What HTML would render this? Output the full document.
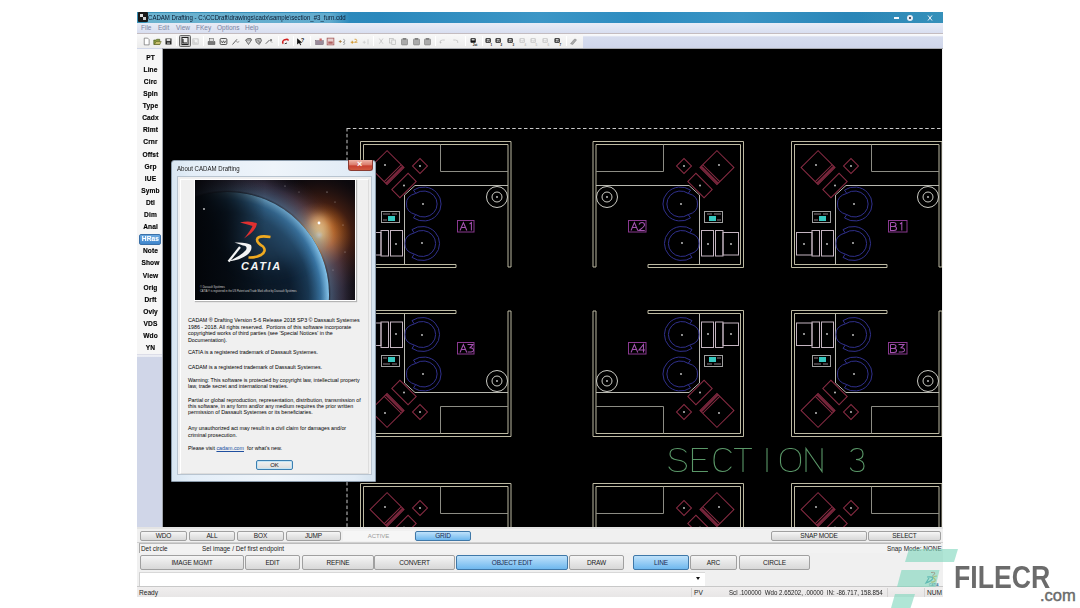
<!DOCTYPE html>
<html><head><meta charset="utf-8">
<style>
*{margin:0;padding:0;box-sizing:border-box}
html,body{width:1080px;height:608px;overflow:hidden;background:#fff;font-family:"Liberation Sans",sans-serif}
.a{position:absolute}
#win{left:137px;top:12px;width:806px;height:585px;background:#f0f0f0}
#title{left:0;top:0;width:806px;height:11px;background:linear-gradient(90deg,#3a92b8 0%,#2a88bc 30%,#3c96c6 50%,#2d8cc0 62%,#3a94c4 75%,#2a86b8 88%,#2b88b4 100%)}
#menu{left:0;top:11px;width:806px;height:11px;background:linear-gradient(#e8ecf6,#d8def0);border-bottom:1px solid #c4bcc0}
#tool{left:0;top:22px;width:806px;height:15px;background:linear-gradient(#fafbfd 0,#f4f6fa 1.5px,#d6dcee 3px,#cfd6ea);border-bottom:1.5px solid #a8aab0}
#toolband{left:0;top:22px;width:446px;height:13.5px;background:linear-gradient(#f8f8f8,#ececec)}
#lp{left:0;top:36px;width:26px;height:479px;background:#d0d6e8;border-right:1.5px solid #a0a4ac}
#lpw{left:0;top:37px;width:25px;height:308px;background:linear-gradient(#f6f6f6 0,#f6f6f6 305px,#dcdde8 305.5px,#eceef4 306.5px,#e8eaf2 308px)}
#canvas{left:26px;top:37px;width:779px;height:478px;background:#000}
#bot{left:0;top:515px;width:806px;height:70px;background:#f0f0f0}
.lbl{position:absolute;left:1px;width:25px;text-align:center;font-weight:bold;font-size:7.2px;color:#000;line-height:8px;transform:scaleX(0.92);letter-spacing:0.1px;-webkit-text-stroke:0.15px #000}
.btn{position:absolute;height:10px;border:1px solid #a0a0a0;border-radius:2px;background:linear-gradient(#f6f6f6,#e6e6e6 50%,#d8d8d8);font-size:6.5px;line-height:8.5px;text-align:center;color:#1a1a1a;letter-spacing:-0.15px}
.btnb{background:linear-gradient(#bfe2fb,#6fb8ee);border-color:#3f78a8;color:#1a2a50}
.dl{position:absolute;left:16px;font-size:5.33px;line-height:7px;color:#000;white-space:nowrap}
.mi{position:absolute;top:1px;font-size:6.5px;color:#7a82a0;line-height:8px}
</style></head><body>
<div id="win" class="a">
  <div id="title" class="a">
  <div class="a" style="left:8px;top:0.5px;width:205px;height:10px;background:linear-gradient(90deg,rgba(150,205,225,.55),rgba(150,205,225,.5) 90%,rgba(150,205,225,0));border-radius:4px"></div>
  <div class="a" style="left:1px;top:0px;width:10px;height:10px;background:#1a1a1a;border-radius:1px"></div>
  <div class="a" style="left:3px;top:2px;width:3px;height:3px;background:#e0e0e0"></div>
  <div class="a" style="left:6px;top:5px;width:3px;height:3px;background:#d0d0d0"></div>
  <div class="a" style="left:11px;top:1px;font-size:7.4px;line-height:9px;color:#0c1a30;white-space:nowrap;transform:scaleX(0.82);transform-origin:0 0">CADAM Drafting - C:\CCDraft\drawings\cadx\sample\section_#3_furn.cdd</div>
  <div class="a" style="left:723px;top:0;width:83px;height:11px;background:linear-gradient(90deg,rgba(40,130,180,0),rgba(50,140,185,.7) 40%,rgba(60,150,190,.6))"></div>
  <div class="a" style="left:757px;top:5px;width:5px;height:1.5px;background:#f4f8fc"></div>
  <div class="a" style="left:769.5px;top:2.5px;width:6px;height:6px;background:#e8eef6;border-radius:50%"><div class="a" style="left:2px;top:2px;width:2px;height:2px;background:#223;border-radius:50%"></div></div>
  <svg class="a" style="left:790px;top:2.5px" width="6" height="6" viewBox="0 0 6 6"><path d="M1,0.5L5,5.5M5,0.5L1,5.5" stroke="#eef2f8" stroke-width="1"/></svg>
</div>
  <div id="menu" class="a">
  <div class="mi" style="left:4px">File</div><div class="mi" style="left:21px">Edit</div><div class="mi" style="left:39px">View</div>
  <div class="mi" style="left:59px">FKey</div><div class="mi" style="left:80px">Options</div><div class="mi" style="left:108px">Help</div>
</div>
  <div id="tool" class="a"></div>
  <div id="toolband" class="a"><svg class="a" style="left:4.5px;top:2.5px" width="9" height="9" viewBox="0 0 12 12"><path d="M3,1.5H7.5L9.5,3.5V10.5H3Z" fill="#fff" stroke="#555" stroke-width="0.8"/></svg><svg class="a" style="left:15.5px;top:2.5px" width="9" height="9" viewBox="0 0 12 12"><path d="M1,4H4L5,3H9V10H1Z" fill="#8a9a40" stroke="#3a4a10" stroke-width="0.7"/><path d="M2,10L4,6H11L9,10Z" fill="#c8c070" stroke="#4a5010" stroke-width="0.6"/></svg><svg class="a" style="left:26.5px;top:2.5px" width="9" height="9" viewBox="0 0 12 12"><rect x="2" y="2" width="8" height="8" fill="#222"/><rect x="3.5" y="2.5" width="5" height="3" fill="#ddd"/><rect x="4" y="7" width="4" height="3" fill="#888"/></svg><svg class="a" style="left:42px;top:1px" width="12" height="12" viewBox="0 0 12 12"><rect x="0.5" y="0.5" width="11" height="11" fill="#c8c8c8" stroke="#666" rx="1"/><rect x="3" y="2.5" width="6" height="7" fill="#eee" stroke="#222"/><path d="M4,4V8H8" stroke="#111" fill="none"/></svg><svg class="a" style="left:53.5px;top:2.5px" width="9" height="9" viewBox="0 0 12 12"><rect x="2.5" y="2.5" width="7" height="7" fill="none" stroke="#bbb"/><path d="M4,4V8H8" stroke="#bbb" fill="none"/></svg><svg class="a" style="left:69.5px;top:2.5px" width="9" height="9" viewBox="0 0 12 12"><path d="M1.5,6H10.5V10H1.5Z" fill="#777" stroke="#333" stroke-width="0.6"/><rect x="3" y="2" width="6" height="4" fill="#ddd" stroke="#444" stroke-width="0.6"/></svg><svg class="a" style="left:81.5px;top:2.5px" width="9" height="9" viewBox="0 0 12 12"><rect x="1.5" y="2" width="9" height="8" fill="#eee" stroke="#222" rx="1.5"/><path d="M3,5L4.5,8L6,5L7.5,8L9,5" stroke="#222" fill="none" stroke-width="0.8"/></svg><svg class="a" style="left:93.5px;top:2.5px" width="9" height="9" viewBox="0 0 12 12"><path d="M2,10L8,3" stroke="#333" stroke-width="1"/><path d="M7,6Q9,8 11,6" stroke="#555" fill="none" stroke-width="0.8"/></svg><svg class="a" style="left:106.5px;top:2.5px" width="9" height="9" viewBox="0 0 12 12"><path d="M2,4L5,2H9L10,4L6,10Z" fill="#ccc" stroke="#333" stroke-width="0.8"/><path d="M3,4H10" stroke="#333" stroke-width="0.6"/></svg><svg class="a" style="left:116.5px;top:2.5px" width="9" height="9" viewBox="0 0 12 12"><path d="M2,3L5,2H9L10,5L7,10L3,7Z" fill="#bbb" stroke="#333" stroke-width="0.8"/><path d="M5,4L8,8" stroke="#444" stroke-width="0.7"/></svg><svg class="a" style="left:127.5px;top:2.5px" width="9" height="9" viewBox="0 0 12 12"><path d="M1,9L6,4" stroke="#333" stroke-width="1"/><path d="M7,6L10,7" stroke="#888" stroke-width="0.8"/><circle cx="8" cy="4" r="1.5" fill="#777"/></svg><svg class="a" style="left:143.5px;top:2.5px" width="9" height="9" viewBox="0 0 12 12"><path d="M3,9Q1,6 4,4L8,3Q10,3 9,5" stroke="#d02020" stroke-width="2" fill="none"/><path d="M8,8L5,9" stroke="#222" stroke-width="1.2"/></svg><svg class="a" style="left:158.5px;top:2.5px" width="9" height="9" viewBox="0 0 12 12"><path d="M1.5,1.5L1.5,10L4,8L6,11L7,10.5L5.5,7.5H8.5Z" fill="#111"/><text x="6.5" y="7" font-size="7" font-weight="bold" font-family="Liberation Sans" fill="#111">?</text></svg><svg class="a" style="left:177.5px;top:2.5px" width="9" height="9" viewBox="0 0 12 12"><rect x="1" y="5" width="10" height="5" fill="#9a8a9a" stroke="#5a4a5a" stroke-width="0.6"/><rect x="6" y="2" width="3" height="3" fill="#c66"/></svg><svg class="a" style="left:188.5px;top:2.5px" width="9" height="9" viewBox="0 0 12 12"><rect x="1.5" y="1.5" width="9" height="9" fill="#e8d0d0" stroke="#a05050" stroke-width="1"/><rect x="3" y="6" width="6" height="3" fill="#b06060"/></svg><svg class="a" style="left:200.5px;top:2.5px" width="9" height="9" viewBox="0 0 12 12"><path d="M1,6H5M3,4V8" stroke="#a07030" stroke-width="1"/><path d="M7,3Q9,3 9,5Q9,7 7,7Q9,7 9,9Q9,10 7,10" stroke="#777" fill="none" stroke-width="0.8"/></svg><svg class="a" style="left:212.5px;top:2.5px" width="9" height="9" viewBox="0 0 12 12"><path d="M1,7H5M3,5V9" stroke="#d09020" stroke-width="1.2"/><path d="M6,3Q9,2 9,5Q8,7 6,7H10" stroke="#d09020" fill="none" stroke-width="1"/></svg><svg class="a" style="left:224.5px;top:2.5px" width="9" height="9" viewBox="0 0 12 12"><path d="M1,7H5M3,5V9M8,3V10" stroke="#c8c8c8" stroke-width="1"/></svg><svg class="a" style="left:239.5px;top:2.5px" width="9" height="9" viewBox="0 0 12 12"><path d="M3,2L8,9M8,2L3,9" stroke="#c0c0c0" stroke-width="1"/></svg><svg class="a" style="left:250.5px;top:2.5px" width="9" height="9" viewBox="0 0 12 12"><rect x="2" y="2" width="5" height="6" fill="#eee" stroke="#c0c0c0"/><rect x="5" y="4" width="5" height="6" fill="#eee" stroke="#c0c0c0"/></svg><svg class="a" style="left:262.5px;top:2.5px" width="9" height="9" viewBox="0 0 12 12"><rect x="2" y="2.5" width="8" height="8" fill="#aaa" stroke="#888" rx="1"/><rect x="4" y="1.5" width="4" height="2" fill="#777"/></svg><svg class="a" style="left:274.5px;top:2.5px" width="9" height="9" viewBox="0 0 12 12"><rect x="2" y="2.5" width="8" height="8" fill="#aaa" stroke="#888" rx="1"/><rect x="4" y="1.5" width="4" height="2" fill="#777"/></svg><svg class="a" style="left:285.5px;top:2.5px" width="9" height="9" viewBox="0 0 12 12"><rect x="2" y="2.5" width="8" height="8" fill="#aaa" stroke="#888" rx="1"/><rect x="4" y="1.5" width="4" height="2" fill="#777"/></svg><svg class="a" style="left:300.5px;top:2.5px" width="9" height="9" viewBox="0 0 12 12"><path d="M3,8Q2,4 6,4H9" stroke="#c0c0c0" fill="none" stroke-width="1"/><path d="M2,6L3,9L5,7" fill="#c0c0c0"/></svg><svg class="a" style="left:313.5px;top:2.5px" width="9" height="9" viewBox="0 0 12 12"><path d="M9,8Q10,4 6,4H3" stroke="#c0c0c0" fill="none" stroke-width="1"/></svg><svg class="a" style="left:331.5px;top:2.5px" width="9" height="9" viewBox="0 0 12 12"><rect x="2" y="1.5" width="7" height="6" fill="#111" rx="1"/><rect x="3.5" y="3" width="4" height="1.5" fill="#fff"/><text x="5" y="11.5" font-size="4" font-weight="bold" font-family="Liberation Sans" fill="#111">Jot</text></svg><svg class="a" style="left:346.5px;top:2.5px" width="9" height="9" viewBox="0 0 12 12"><rect x="2" y="1.5" width="7" height="6" fill="#111" rx="1"/><rect x="3.5" y="3" width="4" height="1.5" fill="#fff"/><rect x="3.5" y="5" width="1.5" height="1.5" fill="#fff"/><rect x="6" y="5" width="1.5" height="1.5" fill="#fff"/><text x="8.5" y="11.5" font-size="4" font-weight="bold" font-family="Liberation Sans" fill="#111">1</text></svg><svg class="a" style="left:356.5px;top:2.5px" width="9" height="9" viewBox="0 0 12 12"><rect x="2" y="1.5" width="7" height="6" fill="#111" rx="1"/><rect x="3.5" y="3" width="4" height="1.5" fill="#fff"/><rect x="3.5" y="5" width="1.5" height="1.5" fill="#fff"/><rect x="6" y="5" width="1.5" height="1.5" fill="#fff"/><text x="8.5" y="11.5" font-size="4" font-weight="bold" font-family="Liberation Sans" fill="#111">2</text></svg><svg class="a" style="left:368.5px;top:2.5px" width="9" height="9" viewBox="0 0 12 12"><rect x="2" y="1.5" width="7" height="6" fill="#111" rx="1"/><rect x="3.5" y="3" width="4" height="1.5" fill="#fff"/><rect x="3.5" y="5" width="1.5" height="1.5" fill="#fff"/><rect x="6" y="5" width="1.5" height="1.5" fill="#fff"/><text x="8.5" y="11.5" font-size="4" font-weight="bold" font-family="Liberation Sans" fill="#111">3</text></svg><svg class="a" style="left:380.5px;top:2.5px" width="9" height="9" viewBox="0 0 12 12"><rect x="2" y="1.5" width="7" height="6" fill="#c4c4c4" rx="1"/><rect x="3.5" y="3" width="4" height="1.5" fill="#fff"/><rect x="3.5" y="5" width="1.5" height="1.5" fill="#fff"/><rect x="6" y="5" width="1.5" height="1.5" fill="#fff"/><text x="8.5" y="11.5" font-size="4" font-weight="bold" font-family="Liberation Sans" fill="#c4c4c4">4</text></svg><svg class="a" style="left:391.5px;top:2.5px" width="9" height="9" viewBox="0 0 12 12"><rect x="2" y="1.5" width="7" height="6" fill="#c4c4c4" rx="1"/><rect x="3.5" y="3" width="4" height="1.5" fill="#fff"/><rect x="3.5" y="5" width="1.5" height="1.5" fill="#fff"/><rect x="6" y="5" width="1.5" height="1.5" fill="#fff"/><text x="8.5" y="11.5" font-size="4" font-weight="bold" font-family="Liberation Sans" fill="#c4c4c4">5</text></svg><svg class="a" style="left:403.5px;top:2.5px" width="9" height="9" viewBox="0 0 12 12"><rect x="2" y="1.5" width="7" height="6" fill="#c4c4c4" rx="1"/><rect x="3.5" y="3" width="4" height="1.5" fill="#fff"/><rect x="3.5" y="5" width="1.5" height="1.5" fill="#fff"/><rect x="6" y="5" width="1.5" height="1.5" fill="#fff"/><text x="8.5" y="11.5" font-size="4" font-weight="bold" font-family="Liberation Sans" fill="#c4c4c4">6</text></svg><svg class="a" style="left:415.5px;top:2.5px" width="9" height="9" viewBox="0 0 12 12"><rect x="2" y="1.5" width="7" height="6" fill="#111" rx="1"/><rect x="3.5" y="3" width="4" height="1.5" fill="#fff"/><rect x="3.5" y="5" width="1.5" height="1.5" fill="#fff"/><rect x="6" y="5" width="1.5" height="1.5" fill="#fff"/><text x="8.5" y="11.5" font-size="4" font-weight="bold" font-family="Liberation Sans" fill="#111">7</text></svg><svg class="a" style="left:431.5px;top:2.5px" width="9" height="9" viewBox="0 0 12 12"><path d="M2,9L7,3Q9,2 10,4L5,10Z" fill="#aaa" stroke="#777" stroke-width="0.6"/></svg><div class="a" style="left:39.0px;top:2px;width:1px;height:10px;background:#c4c4c4;border-right:1px solid #fff"></div><div class="a" style="left:66.4px;top:2px;width:1px;height:10px;background:#c4c4c4;border-right:1px solid #fff"></div><div class="a" style="left:141.0px;top:2px;width:1px;height:10px;background:#c4c4c4;border-right:1px solid #fff"></div><div class="a" style="left:156.0px;top:2px;width:1px;height:10px;background:#c4c4c4;border-right:1px solid #fff"></div><div class="a" style="left:172.6px;top:2px;width:1px;height:10px;background:#c4c4c4;border-right:1px solid #fff"></div><div class="a" style="left:236.0px;top:2px;width:1px;height:10px;background:#c4c4c4;border-right:1px solid #fff"></div><div class="a" style="left:297.9px;top:2px;width:1px;height:10px;background:#c4c4c4;border-right:1px solid #fff"></div><div class="a" style="left:327.9px;top:2px;width:1px;height:10px;background:#c4c4c4;border-right:1px solid #fff"></div><div class="a" style="left:345.0px;top:2px;width:1px;height:10px;background:#c4c4c4;border-right:1px solid #fff"></div><div class="a" style="left:429.0px;top:2px;width:1px;height:10px;background:#c4c4c4;border-right:1px solid #fff"></div></div>
  <div id="lp" class="a"></div>
  <div id="lpw" class="a"><div class="lbl" style="top:4.7px">PT</div><div class="lbl" style="top:16.8px">Line</div><div class="lbl" style="top:28.9px">Circ</div><div class="lbl" style="top:41.0px">Spln</div><div class="lbl" style="top:53.1px">Type</div><div class="lbl" style="top:65.2px">Cadx</div><div class="lbl" style="top:77.3px">Rlmt</div><div class="lbl" style="top:89.4px">Crnr</div><div class="lbl" style="top:101.5px">Offst</div><div class="lbl" style="top:113.6px">Grp</div><div class="lbl" style="top:125.7px">IUE</div><div class="lbl" style="top:137.8px">Symb</div><div class="lbl" style="top:149.9px">Dtl</div><div class="lbl" style="top:162.0px">Dim</div><div class="lbl" style="top:174.1px">Anal</div><div class="a" style="left:1.5px;top:184.7px;width:22px;height:11px;background:linear-gradient(#6aa8e0,#3f86cc);border:1px solid #3a70a8;border-radius:2px"></div><div class="lbl" style="top:186.2px;color:#fff;-webkit-text-stroke:0.1px #fff">HRas</div><div class="lbl" style="top:198.3px">Note</div><div class="lbl" style="top:210.4px">Show</div><div class="lbl" style="top:222.5px">View</div><div class="lbl" style="top:234.6px">Orig</div><div class="lbl" style="top:246.7px">Drft</div><div class="lbl" style="top:258.8px">Ovly</div><div class="lbl" style="top:270.9px">VDS</div><div class="lbl" style="top:283.0px">Wdo</div><div class="lbl" style="top:295.1px">YN</div></div>
  <div id="canvas" class="a"><svg class="a" style="left:0;top:0" width="779" height="478" viewBox="163 49 779 478">
<defs>
<g id="u" fill="none" stroke-width="1">
  <path d="M96,126.5H0.5V0.5H151V126H148V3.5H3.5V123.5H96Z" stroke="#bcb9a2"/>
  <path d="M80.5,3.5V30.5H148" stroke="#8c8c84"/>
  <path d="M148,44.5H55L44.5,54V123" stroke="#b8b8b0"/>
  <circle cx="137" cy="56" r="10.5" stroke="#cbcbc4"/>
  <circle cx="137" cy="56" r="5" stroke="#cbcbc4"/>
  <g stroke="#30308c">
    <path id="ch" d="M53.5,49.1A17.5,17 0 1 1 53.5,76.9L55.8,73.6A13.5,13 0 1 0 55.8,52.4ZM55.8,52.4Q46,55 46.5,63Q46,71 55.8,73.6"/>
    <path d="M53.5,49.1A17.5,17 0 1 1 53.5,76.9L55.8,73.6A13.5,13 0 1 0 55.8,52.4ZM55.8,52.4Q46,55 46.5,63Q46,71 55.8,73.6" transform="translate(-1.5,39.5)"/>
  </g>
  <g stroke="#8a2c44">
    <g transform="translate(26,25.5) rotate(-45)"><rect x="-12" y="-10.5" width="24" height="24"/><path d="M-12,9.5H12M-12,11.5H12" stroke-width="1"/><path d="M-12,12.5H12" stroke-width="1.2" stroke="#802840"/></g>
    <g transform="translate(44,44.5) rotate(-45)"><rect x="-11.5" y="-5.75" width="23" height="11.5"/></g>
    <g transform="translate(60,25) rotate(45)"><rect x="-5.3" y="-5.3" width="10.6" height="10.6"/></g>
  </g>
  <rect x="21.5" y="70.5" width="18" height="11" stroke="#a0a0a0"/>
  <rect x="28" y="75" width="7" height="5" fill="#38c8c0" stroke="none"/>
  <path d="M23,73H30M32,73H37M23,79H27" stroke="#b0a0a8" stroke-width="0.8"/>
  <g stroke="#c4b4c0">
    <rect x="5.5" y="91.5" width="15.5" height="22.5"/>
    <rect x="21" y="89.5" width="7.5" height="25.5"/>
    <rect x="30.5" y="89.5" width="12" height="25.5"/>
  </g>
  <g fill="#d0d0d0" stroke="none">
    <circle cx="63" cy="63" r="0.9"/><circle cx="62" cy="102" r="0.9"/><circle cx="137" cy="56" r="0.9"/>
    <circle cx="25" cy="24" r="0.9"/><circle cx="44" cy="44.5" r="0.9"/><circle cx="60" cy="25" r="0.9"/>
    <circle cx="13" cy="103" r="0.9"/><circle cx="36" cy="103" r="0.9"/>
  </g>
</g>
</defs>
<path d="M347,128.5H941M347,128V527" stroke="#c8c8c8" stroke-width="1" stroke-dasharray="3.5 2.4" fill="none"/>
<use href="#u" transform="translate(360,141)"/>
<use href="#u" transform="translate(744,141) scale(-1,1)"/>
<use href="#u" transform="translate(791,141)"/>
<use href="#u" transform="translate(360,437) scale(1,-1)"/>
<use href="#u" transform="translate(744,437) scale(-1,-1)"/>
<use href="#u" transform="translate(791,437) scale(1,-1)"/>
<use href="#u" transform="translate(360,483)"/>
<use href="#u" transform="translate(744,483) scale(-1,1)"/>
<use href="#u" transform="translate(791,483)"/>
<g fill="none" stroke="#8a3890" stroke-width="1">
  <rect x="457.5" y="220.5" width="16.5" height="11.5"/>
  <rect x="628.5" y="220.5" width="17.5" height="11.5"/>
  <rect x="888.5" y="220.5" width="18.5" height="11.5"/>
  <rect x="457.5" y="342.5" width="16.5" height="11.5"/>
  <rect x="628.5" y="342.5" width="17.5" height="11.5"/>
  <rect x="888.5" y="342.5" width="18.5" height="11.5"/>
</g>
<path fill="none" stroke="#a452b0" stroke-width="1.05" d="M460,230.5 L463.4,222.5 L466.8,230.5 M461.3,227.5 H465.5 M469.6,224.0 L471.40000000000003,222.5 V230.5 M631,230.5 L634.4,222.5 L637.8,230.5 M632.3,227.5 H636.5 M639,224.5 Q639.8,222.5 642,222.5 Q644.5,222.5 644.5,225.0 Q644.5,226.5 639,230.5 H644.8 M890.5,222.5 V230.5 H894.0 Q896.5,230.5 896.5,228.5 Q896.5,226.5 894.0,226.5 H890.5 M890.5,222.5 H893.5 Q896.0,222.5 896.0,224.5 Q896.0,226.5 893.5,226.5 M900,224.0 L901.8,222.5 V230.5 M460,352.5 L463.4,344.5 L466.8,352.5 M461.3,349.5 H465.5 M467.5,344.5 H473.0 L470.0,347.8 Q473.5,347.8 473.5,350.2 Q473.5,352.5 467.7,352.0 M631,352.5 L634.4,344.5 L637.8,352.5 M632.3,349.5 H636.5 M643.5,352.5 V344.5 L639,350.0 H645 M890.5,344.5 V352.5 H894.0 Q896.5,352.5 896.5,350.5 Q896.5,348.5 894.0,348.5 H890.5 M890.5,344.5 H893.5 Q896.0,344.5 896.0,346.5 Q896.0,348.5 893.5,348.5 M898.5,344.5 H904.0 L901.0,347.8 Q904.5,347.8 904.5,350.2 Q904.5,352.5 898.7,352.0"/>
<g fill="none" stroke="#5a9868" stroke-width="1.1" stroke-linecap="round">
<path d="M686,452Q683,448.5 677.5,448.5Q670,448.5 670,454Q670,459 677.5,460Q686,461 686.5,466Q686,471.5 677.5,471.5Q671,471.5 669,467"/>
<path d="M707.5,448.5H692.5V471.5H707.5M692.5,459.5H705"/>
<path d="M731,452.5Q728,448.5 722.5,448.5Q714,448.5 714,460Q714,471.5 722.5,471.5Q728,471.5 731,467"/>
<path d="M734.5,448.5H751.5M743,448.5V471.5"/>
<path d="M767,448.5V471.5"/>
<rect x="780.5" y="448.5" width="20" height="23" rx="9"/>
<path d="M806,471.5V448.5L822,471.5V448.5"/>
<path d="M851,451.5Q853,448.5 857,448.5Q863,448.5 863,454Q863,459.5 856,459.5Q864,460 864,466Q864,471.5 857,471.5Q852,471.5 850.5,468"/>
</g>
</svg>
</div>
  <div id="bot" class="a">
  <div class="a" style="left:0;top:0;width:806px;height:2px;background:#e4e4e4"></div>
  <div class="btn" style="left:3px;top:4px;width:47px">WDO</div>
  <div class="btn" style="left:52px;top:4px;width:46px">ALL</div>
  <div class="btn" style="left:100px;top:4px;width:47px">BOX</div>
  <div class="btn" style="left:149px;top:4px;width:55px">JUMP</div>
  <div class="a" style="left:206px;top:4px;width:71px;height:10px;background:#f6f6f6;font-size:6px;line-height:10px;text-align:center;color:#9a9a9a">ACTIVE</div>
  <div class="btn btnb" style="left:278px;top:4px;width:56px">GRID</div>
  <div class="btn" style="left:634px;top:4px;width:96px">SNAP MODE</div>
  <div class="btn" style="left:731px;top:4px;width:73px">SELECT</div>
  <div class="a" style="left:0;top:15px;width:806px;height:1px;background:#d0d0d0"></div>
  <div class="a" style="left:2px;top:15.5px;width:802px;height:10.5px;border-left:1px solid #aaa;border-top:1px solid #bbb;background:#f2f2f2"></div>
  <div class="a" style="left:4px;top:17.8px;font-size:6.4px;line-height:8px;color:#222">Det circle</div>
  <div class="a" style="left:65px;top:17.8px;font-size:6.4px;line-height:8px;color:#222">Sel image / Def first endpoint</div>
  <div class="a" style="left:750px;top:17.8px;font-size:6.4px;line-height:8px;color:#222">Snap Mode: NONE</div>
  <div class="btn" style="left:3px;top:28px;width:104px;height:15px;line-height:14px">IMAGE MGMT</div>
  <div class="btn" style="left:108px;top:28px;width:55px;height:15px;line-height:14px">EDIT</div>
  <div class="btn" style="left:165px;top:28px;width:72px;height:15px;line-height:14px">REFINE</div>
  <div class="btn" style="left:237px;top:28px;width:81px;height:15px;line-height:14px">CONVERT</div>
  <div class="btn btnb" style="left:319px;top:28px;width:112px;height:15px;line-height:14px">OBJECT EDIT</div>
  <div class="btn" style="left:432px;top:28px;width:55px;height:15px;line-height:14px">DRAW</div>
  <div class="btn btnb" style="left:496px;top:28px;width:56px;height:15px;line-height:14px">LINE</div>
  <div class="btn" style="left:553px;top:28px;width:47px;height:15px;line-height:14px">ARC</div>
  <div class="btn" style="left:602px;top:28px;width:71px;height:15px;line-height:14px">CIRCLE</div>
  <div class="a" style="left:1.5px;top:44.5px;width:566px;height:15px;background:#fff;border-top:1px solid #d8d8d8;border-left:1px solid #d0d0d0"></div>
  <div class="a" style="left:559px;top:50px;width:0;height:0;border-left:2px solid transparent;border-right:2px solid transparent;border-top:3px solid #111"></div>
  <svg class="a" style="left:786px;top:44px" width="20" height="16" viewBox="0 0 20 16">
  <path d="M8,1.5Q11,1 12,2Q11,4 9,5.5" fill="none" stroke="#d04040" stroke-width="1"/>
  <path d="M4,6Q9,5.5 10,7Q9,10 3,12L6,7" fill="none" stroke="#2a8aa0" stroke-width="1.2"/>
  <path d="M14,5Q10,5 10.5,7Q13,8.5 12,10Q10,11.5 8,11" fill="none" stroke="#e0a020" stroke-width="1.1"/>
  <text x="6" y="15" font-size="3.2" font-family="Liberation Sans" font-weight="bold" font-style="italic" fill="#2a6a90">CATIA</text>
</svg>
  <div class="a" style="left:0;top:59px;width:806px;height:1px;background:#c8c8c8"></div>
  <div class="a" style="left:0;top:60px;width:806px;height:10px;background:linear-gradient(#f0eeee,#e8e6e6)"></div>
  <div class="a" style="left:2px;top:61px;font-size:6.6px;line-height:9px;color:#222">Ready</div>
  <div class="a" style="left:553.5px;top:60.5px;width:1px;height:9px;background:#d4d2d2"></div>
  <div class="a" style="left:750px;top:60.5px;width:1px;height:9px;background:#d4d2d2"></div>
  <div class="a" style="left:786.5px;top:60.5px;width:1px;height:9px;background:#d4d2d2"></div>
  <div class="a" style="left:557px;top:61px;font-size:6.6px;line-height:9px;color:#222">PV</div>
  <div class="a" style="left:592px;top:61px;font-size:6.6px;line-height:9px;color:#222;white-space:nowrap;transform:scaleX(0.93);transform-origin:0 0">Scl .100000&nbsp; Wdo 2.65202, .00000&nbsp; IN: -86.717, 158.854</div>
  <div class="a" style="left:790px;top:61px;font-size:6.6px;line-height:9px;color:#222">NUM</div>
</div>
</div>
<div id="dlg" class="a" style="left:171px;top:160px;width:205px;height:322px;border:1px solid #8a9aaa;border-radius:3px 3px 0 0;background:linear-gradient(90deg,#d8e6f2,#e4eef8 10%,#eef4fa 50%,#e2ecf6 90%,#d4e2ee);box-shadow:0 0 2px rgba(0,0,0,.4)">
  <div class="a" style="left:5px;top:2.5px;font-size:7px;line-height:9px;color:#1a1a1a;white-space:nowrap;transform:scaleX(0.87);transform-origin:0 0">About CADAM Drafting</div>
  <div class="a" style="left:176px;top:-1px;width:25px;height:11px;border:1px solid #8a3a30;border-top:none;border-radius:0 0 3px 3px;background:linear-gradient(#eeb4a8,#dc8070 45%,#c84030 60%,#d05a40)"></div>
  <div class="a" style="left:185px;top:-2px;font-size:9px;line-height:11px;color:#fff;font-weight:bold">&#215;</div>
  <div class="a" style="left:4.5px;top:15px;width:195px;height:299px;background:#f0f0f0;border:1px solid #b8c4d0">
    <div class="a" style="left:2px;top:2px;width:189px;height:295px;border:1px solid #fff;border-right-color:#ddd;border-bottom-color:#ddd"></div>
  </div>
  <svg class="a" style="left:23px;top:19px" width="160" height="120" viewBox="0 0 160 120">
  <defs>
    <radialGradient id="sun" cx="124" cy="55" r="60" gradientUnits="userSpaceOnUse">
      <stop offset="0" stop-color="#fff8d8"/><stop offset="0.07" stop-color="#ffc860"/><stop offset="0.25" stop-color="#e07820" stop-opacity="0.9"/><stop offset="0.55" stop-color="#703018" stop-opacity="0.55"/><stop offset="1" stop-color="#2a1418" stop-opacity="0.2"/>
    </radialGradient>
    <radialGradient id="rim" cx="32" cy="114" r="102" gradientUnits="userSpaceOnUse">
      <stop offset="0" stop-color="#081420"/><stop offset="0.62" stop-color="#0e2034"/><stop offset="0.8" stop-color="#1c3e5c"/><stop offset="0.92" stop-color="#3a76a4"/><stop offset="1" stop-color="#86c4ea"/>
    </radialGradient>
    <radialGradient id="halo" cx="32" cy="114" r="135" gradientUnits="userSpaceOnUse">
      <stop offset="0.74" stop-color="#607aa0" stop-opacity="0"/><stop offset="0.77" stop-color="#6a88b0" stop-opacity="0.55"/><stop offset="0.86" stop-color="#706890" stop-opacity="0.35"/><stop offset="1" stop-color="#302838" stop-opacity="0"/>
    </radialGradient>
    <linearGradient id="mk" gradientUnits="userSpaceOnUse" x1="25" y1="70" x2="105" y2="40">
      <stop offset="0" stop-color="#181818"/><stop offset="0.5" stop-color="#909090"/><stop offset="1" stop-color="#fff"/>
    </linearGradient>
    <filter id="bl" x="-50%" y="-50%" width="200%" height="200%"><feGaussianBlur stdDeviation="10"/></filter>
    <linearGradient id="shd" x1="0" y1="0" x2="1" y2="0"><stop offset="0" stop-color="#020306" stop-opacity="0.9"/><stop offset="0.45" stop-color="#020306" stop-opacity="0.6"/><stop offset="1" stop-color="#020306" stop-opacity="0"/></linearGradient>
    <filter id="bl2" x="-100%" y="-100%" width="300%" height="300%"><feGaussianBlur stdDeviation="4"/></filter>
    <mask id="m1" maskUnits="userSpaceOnUse" x="-100" y="-20" width="300" height="260"><rect x="-100" y="-20" width="300" height="260" fill="url(#mk)"/></mask>
  </defs>
  <rect width="160" height="120" fill="#04060a"/>
  <rect width="160" height="120" fill="url(#sun)"/>
  <circle cx="32" cy="114" r="135" fill="url(#halo)"/>
  <circle cx="32" cy="114" r="102" fill="#0a1622"/>
  <circle cx="32" cy="114" r="102" fill="url(#rim)" mask="url(#m1)"/>
  <ellipse cx="75" cy="55" rx="40" ry="30" fill="#3a6a90" opacity="0.35" filter="url(#bl)"/>
  <rect x="0" y="0" width="70" height="120" fill="url(#shd)"/>
  <circle cx="124" cy="44" r="9" fill="#ffe0a0" opacity="0.5" filter="url(#bl2)"/>
  <g fill="#fff"><circle cx="9" cy="29" r="0.9" opacity="0.8"/><circle cx="124" cy="43" r="1.4"/><circle cx="90" cy="6" r="0.5" opacity="0.6"/><circle cx="132" cy="12" r="0.6" opacity="0.7"/><circle cx="148" cy="45" r="0.5" opacity="0.6"/><circle cx="138" cy="90" r="0.5" opacity="0.5"/><circle cx="140" cy="22" r="0.5" opacity="0.6"/><circle cx="150" cy="72" r="0.5" opacity="0.6"/><circle cx="104" cy="12" r="0.5" opacity="0.5"/></g>
  <path d="M45,42.5Q55,40 62,43.5Q61,51 49,58.5Q56,50 57.5,46Q52,44 45,42.5Z" fill="#e03030"/>
  <path d="M39.5,62.5Q52,62 56,65Q58,70 52,75Q45,80 33.5,81.5Q47,75 51,70Q53,66 48,65.5Q44,64 39.5,62.5Z" fill="#f4f4f4"/>
  <path d="M45,67L33.5,81.5" stroke="#f4f4f4" stroke-width="2.2"/>
  <path d="M75.5,57Q63,55 62,59.5Q62,63 68,66.5Q72,71 66,75Q60,78 53.5,77.5" fill="none" stroke="#f0aa20" stroke-width="2.6"/>
  <text x="46" y="89.5" font-family="Liberation Sans" font-weight="bold" font-style="italic" font-size="11" letter-spacing="1.6" fill="#f6f6f6">CATIA</text>
  <text x="5" y="107.5" font-family="Liberation Sans" font-size="2.6" fill="#d0d0d0">© Dassault Systèmes</text>
  <text x="5" y="112" font-family="Liberation Sans" font-size="2.6" fill="#d0d0d0">CATIA ® is registered in the US Patent and Trade Mark office by Dassault Systèmes</text>
</svg>
<div class="a" style="left:22px;top:18px;width:162px;height:122px;border:1px solid #fff;box-shadow:1px 1px 1px rgba(0,0,0,.25)"></div>
  <div class="dl" style="top:156.0px">CADAM ® Drafting Version 5-6 Release 2018 SP3 © Dassault Systemes</div><div class="dl" style="top:162.5px">1986 - 2018. All rights reserved.&nbsp; Portions of this software incorporate</div><div class="dl" style="top:169.1px">copyrighted works of third parties (see 'Special Notices' in the</div><div class="dl" style="top:175.9px">Documentation).</div><div class="dl" style="top:188.0px">CATIA is a registered trademark of Dassault Systemes.</div><div class="dl" style="top:202.5px">CADAM is a registered trademark of Dassault Systemes.</div><div class="dl" style="top:215.5px">Warning: This software is protected by copyright law, intellectual property</div><div class="dl" style="top:221.9px">law, trade secret and international treaties.</div><div class="dl" style="top:235.5px">Partial or global reproduction, representation, distribution, transmission of</div><div class="dl" style="top:241.9px">this software, in any form and/or any medium requires the prior written</div><div class="dl" style="top:248.3px">permission of Dassault Systemes or its beneficiaries.</div><div class="dl" style="top:264.0px">Any unauthorized act may result in a civil claim for damages and/or</div><div class="dl" style="top:270.5px">criminal prosecution.</div><div class="dl" style="top:284.3px">Please visit <span style="color:#2050a0;text-decoration:underline">cadam.com</span>&nbsp; for what's new.</div>
  <div class="a" style="left:84px;top:299px;width:37px;height:10px;border:1px solid #3c7fb1;border-radius:2px;background:linear-gradient(#f2f2f2,#dcdcdc);font-size:6px;line-height:8px;text-align:center;color:#111;box-shadow:inset 0 0 0 1px #c4e4f4">OK</div>
</div>
<svg class="a" style="left:0;top:0" width="1080" height="608" viewBox="0 0 1080 608">
  <g fill="#7fd6bd" fill-opacity="0.62">
    <path d="M909,549H958L954,562H905Z"/>
    <path d="M901.5,570H939.5L935.5,587H897Z"/>
    <path d="M895,594H915L910.5,608H891Z"/>
  </g>
</svg>
<div class="a" style="left:954px;top:560.2px;font-size:31px;line-height:36px;font-weight:bold;color:#6b6b6b;transform:scaleX(0.86);transform-origin:0 0;letter-spacing:0px">FILECR</div>
<div class="a" style="left:1040px;top:586px;font-size:16.5px;line-height:18px;color:#6b6b6b;-webkit-text-stroke:0.45px #6b6b6b">.com</div>
</body></html>
